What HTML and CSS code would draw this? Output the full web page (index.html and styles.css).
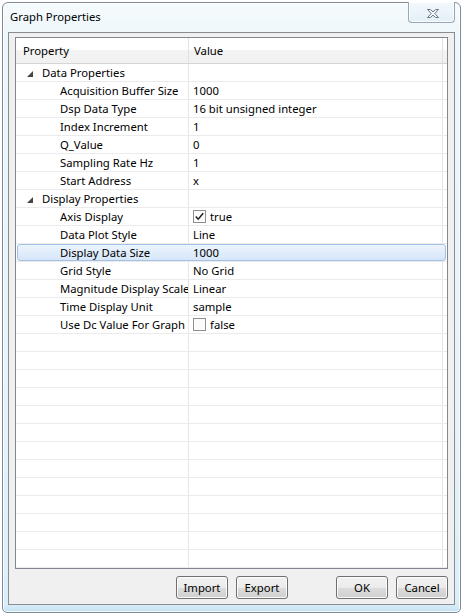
FILE: index.html
```html
<!DOCTYPE html>
<html>
<head>
<meta charset="utf-8">
<title>Graph Properties</title>
<link rel="stylesheet" href="styles.css">
</head>
<body>
<div class="window">
  <div class="titlebar">
    <span class="title">Graph Properties</span>
    <div class="close">
      <svg width="12" height="9" viewBox="0 0 12 9"><polygon points="0.5,0.5 3.3,0.5 6,2.8 8.7,0.5 11.5,0.5 7.8,4.5 11.5,8.5 8.7,8.5 6,6.2 3.3,8.5 0.5,8.5 4.2,4.5" fill="#f7f9fa" stroke="#6a7580" stroke-width="1" stroke-linejoin="round"/></svg>
    </div>
  </div>
  <div class="client">
    <div class="table">
      <div class="row head"><div class="cell c1">Property</div><div class="cell c2">Value</div><div class="cell c3"></div></div>
      <div class="row cat"><div class="cell c1"><svg class="tri" width="6" height="6" viewBox="0 0 6 6"><polygon points="6,0 6,6 0,6" fill="#454545"/></svg>Data Properties</div><div class="cell c2"></div><div class="cell c3"></div></div>
      <div class="row prop"><div class="cell c1">Acquisition Buffer Size</div><div class="cell c2">1000</div><div class="cell c3"></div></div>
      <div class="row prop"><div class="cell c1">Dsp Data Type</div><div class="cell c2">16 bit unsigned integer</div><div class="cell c3"></div></div>
      <div class="row prop"><div class="cell c1">Index Increment</div><div class="cell c2">1</div><div class="cell c3"></div></div>
      <div class="row prop"><div class="cell c1">Q_Value</div><div class="cell c2">0</div><div class="cell c3"></div></div>
      <div class="row prop"><div class="cell c1">Sampling Rate Hz</div><div class="cell c2">1</div><div class="cell c3"></div></div>
      <div class="row prop"><div class="cell c1">Start Address</div><div class="cell c2">x</div><div class="cell c3"></div></div>
      <div class="row cat"><div class="cell c1"><svg class="tri" width="6" height="6" viewBox="0 0 6 6"><polygon points="6,0 6,6 0,6" fill="#454545"/></svg>Display Properties</div><div class="cell c2"></div><div class="cell c3"></div></div>
      <div class="row prop"><div class="cell c1">Axis Display</div><div class="cell c2 check"><svg class="cb" width="13" height="13" viewBox="0 0 13 13"><rect x="0.5" y="0.5" width="12" height="12" fill="#fbfbfb" stroke="#8e8f8f"/><path d="M2.8 6.6 L5.2 9.2 L10.2 3.2" fill="none" stroke="#1e1e1e" stroke-width="1.5"/></svg>true</div><div class="cell c3"></div></div>
      <div class="row prop"><div class="cell c1">Data Plot Style</div><div class="cell c2">Line</div><div class="cell c3"></div></div>
      <div class="row prop sel"><div class="cell c1">Display Data Size</div><div class="cell c2">1000</div><div class="cell c3"></div></div>
      <div class="row prop"><div class="cell c1">Grid Style</div><div class="cell c2">No Grid</div><div class="cell c3"></div></div>
      <div class="row prop"><div class="cell c1">Magnitude Display Scale</div><div class="cell c2">Linear</div><div class="cell c3"></div></div>
      <div class="row prop"><div class="cell c1">Time Display Unit</div><div class="cell c2">sample</div><div class="cell c3"></div></div>
      <div class="row prop"><div class="cell c1">Use Dc Value For Graph</div><div class="cell c2 check"><svg class="cb" width="13" height="13" viewBox="0 0 13 13"><rect x="0.5" y="0.5" width="12" height="12" fill="#fbfbfb" stroke="#8e8f8f"/></svg>false</div><div class="cell c3"></div></div>
      <div class="row"><div class="cell c1"></div><div class="cell c2"></div><div class="cell c3"></div></div>
      <div class="row"><div class="cell c1"></div><div class="cell c2"></div><div class="cell c3"></div></div>
      <div class="row"><div class="cell c1"></div><div class="cell c2"></div><div class="cell c3"></div></div>
      <div class="row"><div class="cell c1"></div><div class="cell c2"></div><div class="cell c3"></div></div>
      <div class="row"><div class="cell c1"></div><div class="cell c2"></div><div class="cell c3"></div></div>
      <div class="row"><div class="cell c1"></div><div class="cell c2"></div><div class="cell c3"></div></div>
      <div class="row"><div class="cell c1"></div><div class="cell c2"></div><div class="cell c3"></div></div>
      <div class="row"><div class="cell c1"></div><div class="cell c2"></div><div class="cell c3"></div></div>
      <div class="row"><div class="cell c1"></div><div class="cell c2"></div><div class="cell c3"></div></div>
      <div class="row"><div class="cell c1"></div><div class="cell c2"></div><div class="cell c3"></div></div>
      <div class="row"><div class="cell c1"></div><div class="cell c2"></div><div class="cell c3"></div></div>
      <div class="row"><div class="cell c1"></div><div class="cell c2"></div><div class="cell c3"></div></div>
      <div class="row"><div class="cell c1"></div><div class="cell c2"></div><div class="cell c3"></div></div>
    </div>
    <div class="buttons">
      <button class="btn">Import</button>
      <button class="btn export">Export</button>
      <button class="btn">OK</button>
      <button class="btn">Cancel</button>
    </div>
  </div>
</div>
</body>
</html>
```
FILE: styles.css
```css
* { box-sizing: border-box; }
html, body { margin: 0; padding: 0; }
body {
  width: 464px;
  height: 615px;
  overflow: hidden;
  background: #ffffff;
  font-family: "Noto Sans", "DejaVu Sans", sans-serif;
  font-size: 11.3px;
  color: #000;
}
.window {
  margin: 2px 0 0 2px;
  width: 459px;
  height: 611px;
  border: 1px solid #7f8c97;
  border-radius: 6px 6px 5px 5px;
  background: linear-gradient(to bottom, #f6fbfd 0, #eef7fb 30px, #e6f3fa 70%, #dbeef8 calc(100% - 8px), #c4e3f3 100%);
  box-shadow: inset 0 0 0 1px rgba(255,255,255,0.75);
  padding: 0 5px 7px 5px;
  display: flex;
  flex-direction: column;
}
.titlebar {
  height: 29px;
  display: flex;
  align-items: flex-start;
  flex: none;
}
.title {
  padding: 6px 0 0 2px;
  line-height: 16px;
  color: #000;
}
.close {
  margin-left: auto;
  margin-top: -1px;
  width: 47px;
  height: 21px;
  border: 1px solid #9aa7b3;
  border-top: 0;
  border-radius: 0 0 4px 4px;
  background: linear-gradient(to bottom, #f3f9fc, #e3f0f7);
  box-shadow: inset 0 0 0 1px rgba(255,255,255,0.8);
  display: flex;
  align-items: center;
  justify-content: center;
  padding: 2px 0 0 2px;
}
.close svg { display: block; }
.client {
  flex: 1;
  border: 1px solid #878d93;
  background: #f0f0f0;
  padding: 4px 6px 5px 6px;
  display: flex;
  flex-direction: column;
}
.table {
  height: 532px;
  flex: none;
  border: 1px solid #828790;
  background: #fff;
  overflow: hidden;
}
.row {
  display: grid;
  grid-template-columns: 173px 254px 1fr;
  height: 18px;
  border-bottom: 1px solid #ebebeb;
  line-height: 17px;
}
.cell {
  border-right: 1px solid #e6e6e6;
  white-space: nowrap;
  overflow: hidden;
}
.cell.c3 { border-right: 0; }
.head {
  height: 26px;
  line-height: 25px;
  border-bottom: 1px solid #d5d5d5;
  background: linear-gradient(to bottom, #ffffff 0, #ffffff 46%, #f3f3f3 46%, #f1f1f1 100%);
}
.head .cell { border-right-color: #e2e2e2; }
.head .c1 { padding-left: 7px; }
.head .c2 { padding-left: 5px; }
.cat .c1 {
  padding-left: 11px;
  display: flex;
  align-items: center;
}
.tri { display: block; margin: 2px 9px 0 0; flex: none; }
.prop .c1 { padding-left: 44px; }
.row .c2 { padding-left: 4px; }
.head .c2 { padding-left: 5px; }
.check {
  display: flex;
  align-items: center;
  gap: 4px;
}
.cb { display: block; flex: none; }
.sel {
  position: relative;
  isolation: isolate;
}
.sel::before {
  content: "";
  position: absolute;
  left: 1px;
  right: 1px;
  top: 0;
  bottom: 0;
  border: 1px solid #a3c1e6;
  border-radius: 3px;
  background: linear-gradient(to bottom, #ecf4fd, #d6e6f8);
  z-index: -1;
}
.sel .cell { border-right-color: transparent; }
.buttons {
  margin-top: 7px;
  height: 23px;
  flex: none;
  display: flex;
  justify-content: flex-end;
  gap: 8px;
}
.btn {
  width: 52px;
  height: 23px;
  padding: 0;
  margin: 0;
  font-family: inherit;
  font-size: 11.3px;
  color: #000;
  border: 1px solid #707070;
  border-radius: 3px;
  background: linear-gradient(to bottom, #f2f2f2 0, #ebebeb 50%, #dddddd 50%, #cfcfcf 100%);
  box-shadow: inset 0 0 0 1px #fbfbfb;
  line-height: 20px;
}
.btn.export { margin-right: 40px; }
```
